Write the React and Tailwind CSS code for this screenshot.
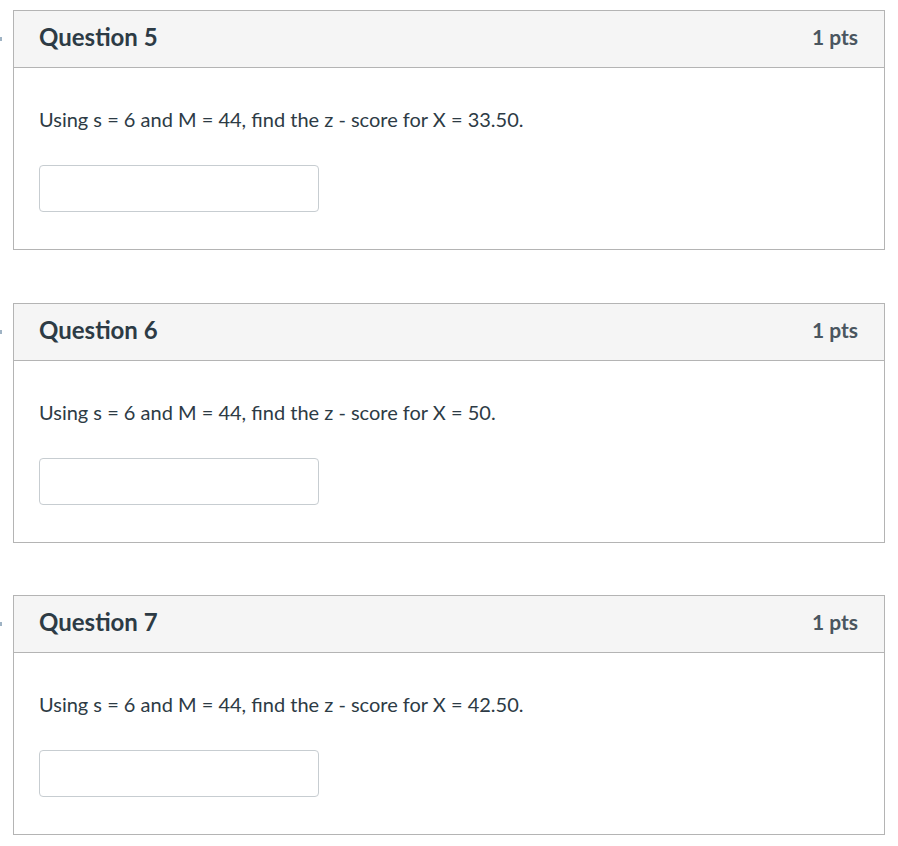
import React from "react"

const questions = [
  { num: 5, x: "33.50" },
  { num: 6, x: "50" },
  { num: 7, x: "42.50" },
]

function QuestionCard({ num, x }) {
  return (
    <div className="flex">
      <div className="w-[13px] shrink-0 pt-[27px]">
        <div className="h-[4px] w-[2px] bg-[#9fb3c4]"></div>
      </div>
      <div className="w-[872px] border border-[#b4b4b4] bg-white">
        {/* header */}
        <div className="flex h-[57px] items-center justify-between border-b border-[#b4b4b4] bg-[#f5f5f5] pb-[4px] pl-[25px] pr-[26px]">
          <h2 className="text-[24px] font-bold text-[#2d3b45]">Question {num}</h2>
          <span className="text-[21px] font-bold text-[#4a5660]">1 pts</span>
        </div>
        {/* body */}
        <div className="px-[25px] pt-[37px] pb-[37px]">
          <p className="text-[20px] leading-[28px] text-[#2d3b45]">
            Using s = 6 and M = 44, find the z - score for X = {x}.
          </p>
          <input
            type="text"
            className="mt-[32px] block h-[47px] w-[280px] rounded-[4px] border border-[#c7cdd1] bg-white"
          />
        </div>
      </div>
    </div>
  )
}

export default function App() {
  return (
    <div className="min-h-[846px] bg-white pt-[10px] font-['Lato',sans-serif]">
      <div className="flex flex-col gap-[52.5px]">
        {questions.map((q) => (
          <QuestionCard key={q.num} {...q} />
        ))}
      </div>
    </div>
  )
}
